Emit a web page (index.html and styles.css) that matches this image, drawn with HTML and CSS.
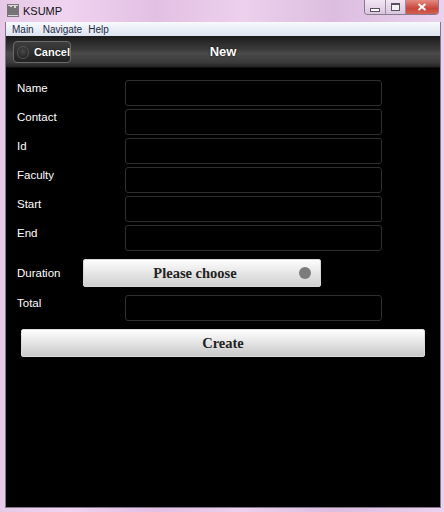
FILE: index.html
```html
<!DOCTYPE html>
<html>
<head>
<meta charset="utf-8">
<link rel="stylesheet" href="styles.css">
</head>
<body>
<div class="window">
  <div class="titlebar">
    <svg class="app-icon" width="12" height="13" viewBox="0 0 12 13">
      <rect x="0.5" y="0.5" width="11" height="12" fill="#d8d8d8" stroke="#777"/>
      <path d="M2 2v9M4 3v8M6 2v9M8 4v7M10 2v9" stroke="#333" stroke-width="1.2"/>
    </svg>
    <span class="app-title">KSUMP</span>
    <div class="controls">
      <div class="ctl ctl-min"><span class="min-bar"></span></div>
      <div class="ctl ctl-max"><span class="max-box"></span></div>
      <div class="ctl ctl-close">
        <svg width="10" height="8" viewBox="0 0 10 8"><path d="M1.5 1l7 6M8.5 1l-7 6" stroke="#fff" stroke-width="2"/></svg>
      </div>
    </div>
  </div>
  <div class="client">
    <div class="menubar">
      <span class="menu-item">Main</span>
      <span class="menu-item">Navigate</span>
      <span class="menu-item">Help</span>
    </div>
    <div class="header">
      <button class="cancel-btn"><span class="dot"></span>Cancel</button>
      <div class="header-title">New</div>
    </div>
    <div class="content">
      <div class="row"><label class="lbl">Name</label><div class="field"></div></div>
      <div class="row"><label class="lbl">Contact</label><div class="field"></div></div>
      <div class="row"><label class="lbl">Id</label><div class="field"></div></div>
      <div class="row"><label class="lbl">Faculty</label><div class="field"></div></div>
      <div class="row"><label class="lbl">Start</label><div class="field"></div></div>
      <div class="row"><label class="lbl">End</label><div class="field"></div></div>
      <div class="row row-select"><label class="lbl lbl-short">Duration</label>
        <div class="select-btn"><span class="select-text">Please choose</span><span class="select-dot"></span></div>
      </div>
      <div class="row row-total"><label class="lbl">Total</label><div class="field"></div></div>
      <button class="create-btn">Create</button>
    </div>
  </div>
</div>
</body>
</html>
```
FILE: styles.css
```css
html, body {
  margin: 0;
  padding: 0;
}
body {
  width: 444px;
  height: 512px;
  overflow: hidden;
  font-family: "Liberation Sans", Arial, sans-serif;
}
.window {
  width: 444px;
  height: 512px;
  display: flex;
  flex-direction: column;
  background: linear-gradient(90deg, #e6c9e6 0%, #efd3ef 15%, #e2c0e4 35%, #ecd0ec 55%, #dcbde0 75%, #ead2ee 100%);
}
.titlebar {
  height: 22px;
  display: flex;
  align-items: flex-start;
  box-sizing: border-box;
  padding-left: 7px;
}
.app-icon {
  margin-top: 4px;
}
.app-title {
  font-size: 11px;
  color: #111;
  margin-left: 4px;
  margin-top: 5px;
}
.controls {
  margin-left: auto;
  margin-right: 5px;
  display: flex;
  height: 14px;
  border: 1px solid #8a7a90;
  border-top: none;
  border-radius: 0 0 4px 4px;
  overflow: hidden;
}
.ctl {
  height: 14px;
  display: flex;
  align-items: center;
  justify-content: center;
  background: linear-gradient(#f1e6f3, #d9c6dd);
}
.ctl-min {
  width: 20px;
  border-right: 1px solid #9c8ca2;
}
.ctl-max {
  width: 19px;
  border-right: 1px solid #9c8ca2;
}
.ctl-close {
  width: 32px;
  background: linear-gradient(#e48a7f, #c9463a 60%, #d0604f);
}
.min-bar {
  width: 8px;
  height: 2px;
  background: #fff;
  border: 1px solid #5b5060;
  margin-top: 5px;
}
.max-box {
  width: 7px;
  height: 5px;
  border: 1px solid #5b5060;
  border-top-width: 2px;
  background: #f2f2f2;
}
.client {
  flex: 1;
  margin: 0 3px 4px 5px;
  border: 1px solid #857489;
  border-top: none;
  display: flex;
  flex-direction: column;
  background: #000;
}
.menubar {
  height: 15px;
  display: flex;
  align-items: center;
  background: linear-gradient(#f7f9fd, #dde4f0);
  padding-left: 6px;
  border-bottom: 1px solid #1e1e1e;
  box-sizing: border-box;
}
.menu-item {
  font-size: 10px;
  color: #1b2a44;
  margin-right: 9px;
}
.menu-item:nth-child(2) {
  margin-right: 6px;
}
.header {
  height: 30px;
  position: relative;
  display: flex;
  align-items: center;
  padding-left: 7px;
  background: linear-gradient(#1d1d1d 0%, #3a3a3a 40%, #4a4a4a 55%, #3a3a3a 85%, #222 100%);
  border-bottom: 1px solid #111;
}
.cancel-btn {
  width: 58px;
  height: 22px;
  border: 1px solid #6a6a6a;
  border-radius: 4px;
  background: linear-gradient(#3d3d3d, #222);
  display: flex;
  align-items: center;
  padding: 0 0 0 3px;
  color: #fff;
  font-family: "Liberation Sans", Arial, sans-serif;
  font-weight: bold;
  font-size: 11px;
  text-shadow: 0 0 1px #000;
}
.dot {
  width: 11px;
  height: 11px;
  border-radius: 50%;
  background: radial-gradient(circle at 50% 40%, #4a4a4a, #1a1a1a);
  border: 1px solid #555;
  margin-right: 5px;
}
.header-title {
  position: absolute;
  left: 0;
  right: 0;
  text-align: center;
  color: #fff;
  font-weight: bold;
  font-size: 13px;
  top: 7px;
  text-shadow: 0 0 2px #000;
  pointer-events: none;
}
.content {
  flex: 1;
  padding: 12px 0 0 11px;
  display: flex;
  flex-direction: column;
}
.row {
  display: flex;
  align-items: flex-start;
  height: 26px;
  margin-bottom: 3px;
}
.lbl {
  width: 108px;
  color: #fff;
  font-size: 11.5px;
  line-height: 14px;
  padding-top: 1px;
}
.field {
  width: 255px;
  height: 24px;
  border: 1px solid #2f2f2f;
  border-radius: 3px;
  background: #000;
}
.row-select {
  height: 28px;
  margin-top: 5px;
  margin-bottom: 8px;
  align-items: center;
}
.lbl-short {
  width: 66px;
  padding-top: 0;
}
.select-btn {
  width: 236px;
  height: 26px;
  border: 1px solid #d8d8d8;
  border-radius: 2px;
  background: linear-gradient(#fdfdfd, #e6e6e6 50%, #cfcfcf);
  display: flex;
  align-items: center;
}
.select-text {
  flex: 1;
  text-align: center;
  font-family: "Liberation Serif", "Times New Roman", serif;
  font-weight: bold;
  font-size: 14.5px;
  color: #222;
  padding-left: 7px;
}
.select-dot {
  width: 12px;
  height: 12px;
  border-radius: 50%;
  background: #7c7c7c;
  margin-right: 9px;
}
.row-total {
  margin-bottom: 8px;
}
.create-btn {
  width: 404px;
  height: 28px;
  margin-left: 4px;
  border: 1px solid #dcdcdc;
  border-radius: 2px;
  background: linear-gradient(#fefefe, #e4e4e4 50%, #c8c8c8);
  font-family: "Liberation Serif", "Times New Roman", serif;
  font-weight: bold;
  font-size: 14.5px;
  color: #222;
  padding: 0;
}
```
